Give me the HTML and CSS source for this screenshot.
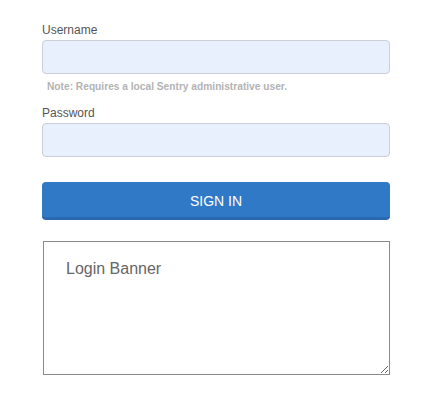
FILE: index.html
```html
<!DOCTYPE html>
<html>
<head>
<meta charset="utf-8">
<link rel="stylesheet" href="styles.css">
</head>
<body>
<form class="login">
  <div class="field">
    <label class="label">Username</label>
    <input class="input" type="text">
    <div class="note">Note: Requires a local Sentry administrative user.</div>
  </div>
  <div class="field">
    <label class="label">Password</label>
    <input class="input" type="password">
  </div>
  <button class="btn" type="button">SIGN IN</button>
  <textarea class="banner" readonly>Login Banner</textarea>
</form>
</body>
</html>
```
FILE: styles.css
```css
html, body {
  margin: 0;
  padding: 0;
  background: #fff;
}
body {
  font-family: "Liberation Sans", Arial, sans-serif;
}
.login {
  width: 348px;
  padding: 23px 0 0 42px;
  display: flex;
  flex-direction: column;
}
.field {
  display: flex;
  flex-direction: column;
}
.label {
  font-size: 12px;
  color: #555;
  line-height: 14px;
  margin-bottom: 3px;
}
.input {
  box-sizing: border-box;
  width: 348px;
  height: 34px;
  border: 1px solid #ccd0d6;
  border-radius: 4px;
  background: #e8f0fe;
  margin: 0;
}
.note {
  font-size: 10.2px;
  font-weight: bold;
  color: #b3b3b3;
  margin: 7px 0 0 5px;
  line-height: 12px;
}
.field + .field {
  margin-top: 13px;
}
.btn {
  margin-top: 25px;
  box-sizing: border-box;
  width: 348px;
  height: 38px;
  border: none;
  border-bottom: 3px solid #2a69b0;
  border-radius: 4px;
  background: #3079c7;
  color: #fff;
  font-family: "Liberation Sans", Arial, sans-serif;
  font-size: 14px;
  padding: 3px 0 0 0;
}
.banner {
  margin: 21px 0 0 1px;
  box-sizing: border-box;
  width: 347px;
  height: 134px;
  border: 1px solid #8a8a8a;
  padding: 18px 22px;
  font-family: "Liberation Sans", Arial, sans-serif;
  font-size: 16px;
  color: #666;
  outline: none;
}
```
